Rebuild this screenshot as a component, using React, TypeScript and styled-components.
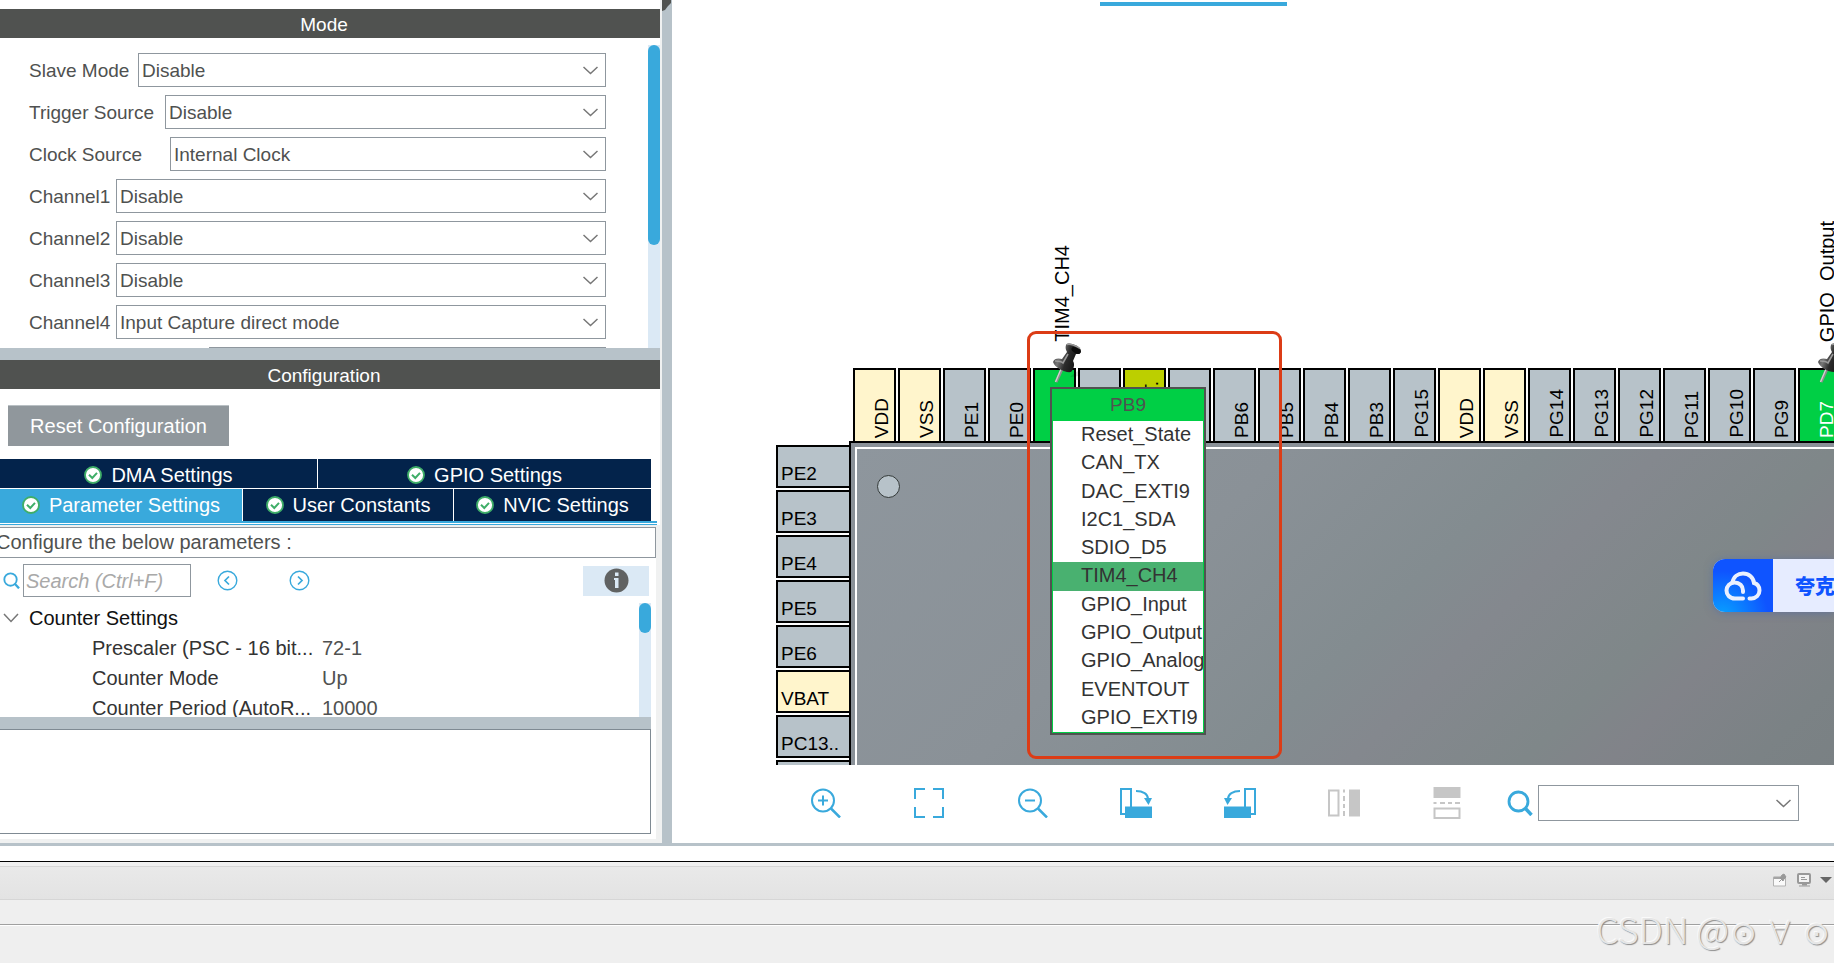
import React from "react";
import styled, { createGlobalStyle, css } from "styled-components";

const color = {
  text: "#4f5150",
  slate: "#505250",
  splitter: "#b7c2c9",
  blue: "#39a9dc",
  paleBlue: "#dbe9f5",
  navy: "#03234b",
  border: "#8f979e",
  pin: "#b7c2c9",
  power: "#fff5cc",
  green: "#00cf45",
  edge: "#f0f1f1",
};

const GlobalStyle = createGlobalStyle`
  *, *::before, *::after { box-sizing: border-box; }
  body { margin: 0; overflow: hidden; background: #fff; }
  body, button, input, select, textarea {
    font-family: "Liberation Sans", Arial, sans-serif;
    font-size: 19px;
    line-height: 22px;
    color: ${color.text};
  }
  button { border: 0; padding: 0; background: none; cursor: pointer; }
  svg { display: block; }
`;

const Page = styled.div`
  display: flex;
  flex-direction: column;
  height: 100vh;
  min-height: 700px;
`;

const Workspace = styled.main`
  display: flex;
  flex: 1;
  min-height: 0;
  border-bottom: 3px solid ${color.splitter};
`;

/* ---------- left side ---------- */

const SidePane = styled.aside`
  display: flex;
  flex-direction: column;
  flex: 0 0 662px;
  border-right: 2px solid ${color.edge};
`;

const VerticalSplitter = styled.div`
  flex: 0 0 10px;
  background: ${color.splitter};
`;

const SplitterCorner = styled.svg`
  width: 10px;
  height: 12px;
`;

const HorizontalSplitter = styled.div`
  flex: 0 0 12px;
  background: ${color.splitter};
`;

const PaneTitle = styled.h2`
  margin: 0;
  height: 29px;
  padding: 2px 12px 0 0;
  font-size: 19px;
  font-weight: 400;
  line-height: 27px;
  text-align: center;
  color: #fff;
  background: ${color.slate};
`;

const ModePane = styled.section`
  flex: 0 0 348px;
  padding-top: 9px;
  overflow: hidden;
`;

const ModeBody = styled.div`
  display: flex;
  justify-content: space-between;
  height: 310px;
`;

const ModeForm = styled.form`
  display: flex;
  flex-direction: column;
  flex: 1;
  gap: 8px;
  padding: 15px 42px 0 29px;
`;

const Field = styled.div<{ $label: number }>`
  display: grid;
  grid-template-columns: ${(p) => p.$label}px 1fr;
  align-items: center;
  flex: 0 0 34px;
  white-space: nowrap;
`;

const FieldLabel = styled.label`
  padding-top: 2px;
`;

const SelectFrame = styled.span<{ $h?: number }>`
  position: relative;
  display: flex;
  flex: 1;
  height: ${(p) => p.$h ?? 34}px;
`;

const Select = styled.select`
  appearance: none;
  width: 100%;
  height: 100%;
  padding: 2px 30px 0 3px;
  border: 1px solid ${color.border};
  border-radius: 0;
  background: #fff;
`;

const SelectArrow = styled.svg`
  position: absolute;
  right: 8px;
  top: 50%;
  margin-top: -4px;
  pointer-events: none;
`;

const Track = styled.div<{ $top: number }>`
  flex: 0 0 12px;
  margin-top: ${(p) => p.$top}px;
  background: ${color.paleBlue};
`;

const Thumb = styled.div<{ $h: number }>`
  height: ${(p) => p.$h}px;
  border-radius: 6px;
  background: ${color.blue};
`;

const ConfigPane = styled.section`
  display: flex;
  flex-direction: column;
  flex: 1;
  min-height: 0;
`;

const ResetButton = styled.button`
  align-self: flex-start;
  width: 221px;
  height: 41px;
  margin: 16px 0 13px 8px;
  font-size: 20px;
  color: #fff;
  background: #90979c;
  border-top: 1px solid #b9c0c4;
`;

const Tabs = styled.div`
  display: flex;
  flex-direction: column;
  gap: 1px;
  padding-right: 9px;
`;

const TabRow = styled.div<{ $cols: string }>`
  display: grid;
  grid-template-columns: ${(p) => p.$cols};
  gap: 1px;
`;

const Tab = styled.button<{ $active?: boolean; $back?: boolean }>`
  display: flex;
  align-items: center;
  justify-content: center;
  gap: 9px;
  height: ${(p) => (p.$back ? 29 : 32)}px;
  padding-top: ${(p) => (p.$back ? 3 : 0)}px;
  font-size: 20px;
  white-space: nowrap;
  color: #fff;
  background: ${(p) => (p.$active ? color.blue : color.navy)};
`;

const TabLine = styled.div`
  flex: 0 0 4px;
  margin-right: 3px;
  border-top: 2px solid ${color.blue};
  border-bottom: 1px solid ${color.blue};
`;

const ConfigBody = styled.div`
  display: flex;
  flex-direction: column;
  flex: 1;
  min-height: 0;
  padding: 2px 4px 4px 0;
  background: ${color.edge};
`;

const ConfigSheet = styled.div`
  display: flex;
  flex-direction: column;
  flex: 1;
  min-height: 0;
  padding-bottom: 5px;
  background: #fff;
`;

const Hint = styled.p`
  margin: 0;
  flex: 0 0 31px;
  font-size: 20px;
  line-height: 29px;
  text-indent: -4px;
  border: 1px solid ${color.border};
  border-left: 0;
`;

const FilterRow = styled.div`
  display: flex;
  align-items: center;
  flex: 0 0 45px;
  padding: 0 7px 0 3px;
`;

const FilterInput = styled.input`
  width: 168px;
  height: 33px;
  margin: 0 26px 0 3px;
  padding: 2px 2px 0;
  font-size: 20px;
  border: 1px solid ${color.border};
  border-radius: 0;
  &::placeholder {
    color: #a9a9a9;
    opacity: 1;
    font-style: italic;
  }
`;

const StepButton = styled.button`
  width: 21px;
  margin-right: 51px;
`;

const InfoButton = styled.button`
  display: flex;
  align-items: center;
  justify-content: center;
  width: 66px;
  height: 30px;
  margin-left: auto;
  background: ${color.paleBlue};
`;

const TreePane = styled.div`
  display: flex;
  flex: 0 0 114px;
  overflow: hidden;
  padding-right: 5px;
`;

const TreeContent = styled.div`
  flex: 1;
`;

const GroupButton = styled.button`
  display: flex;
  align-items: center;
  gap: 10px;
  height: 30px;
  padding-left: 3px;
  font-size: 20px;
  color: #111;
`;

const ParamTable = styled.table`
  border-collapse: collapse;
  th,
  td {
    height: 30px;
    padding: 0;
    font-size: 20px;
    line-height: 22px;
    text-align: left;
    font-weight: 400;
    white-space: nowrap;
  }
  th {
    width: 322px;
    padding-left: 92px;
    color: #333;
  }
`;

const LowerSplitter = styled(HorizontalSplitter)`
  margin-right: 5px;
`;

const Notes = styled.textarea`
  flex: 1;
  min-height: 0;
  margin-right: 5px;
  border: 1px solid #7f8a93;
  border-left: 0;
  border-radius: 0;
  resize: none;
  outline: none;
`;

/* ---------- pinout view ---------- */

const PinoutPane = styled.section`
  display: flex;
  flex-direction: column;
  flex: 1;
  min-width: 0;
`;

const Canvas = styled.div`
  position: relative;
  flex: 1;
  overflow: hidden;
`;

const ActiveViewBar = styled.div`
  position: absolute;
  left: 428px;
  top: 2px;
  width: 187px;
  height: 4px;
  background: ${color.blue};
`;

const TopPins = styled.div`
  position: absolute;
  left: 181px;
  top: 368px;
  display: flex;
  gap: 2px;
`;

const SidePins = styled.div`
  position: absolute;
  left: 104px;
  top: 445px;
  display: flex;
  flex-direction: column;
  gap: 2px;
`;

type Kind = "io" | "power" | "boot" | "used";
const fills: Record<Kind, string> = {
  io: color.pin,
  power: color.power,
  boot: "#bccf00",
  used: color.green,
};

const pinLook = css<{ $kind: Kind }>`
  color: ${(p) => (p.$kind === "used" ? "#fff" : "#000")};
  background: ${(p) => fills[p.$kind]};
  border: 2px solid #000;
`;

const TopPin = styled.button<{ $kind: Kind }>`
  ${pinLook}
  position: relative;
  display: flex;
  align-items: flex-end;
  justify-content: flex-end;
  width: 43px;
  height: 75px;
  padding: 0 1px 3px 0;
`;

const UpText = styled.span`
  writing-mode: vertical-rl;
  transform: rotate(180deg);
  white-space: nowrap;
`;

const SignalLabel = styled(UpText)`
  position: absolute;
  right: 1px;
  bottom: 99px;
  font-size: 20px;
  color: #000;
`;

const PushPin = styled.svg`
  position: absolute;
  left: 18px;
  top: -28px;
  overflow: visible;
`;

const SidePin = styled.button<{ $kind: Kind }>`
  ${pinLook}
  display: flex;
  align-items: flex-end;
  width: 76px;
  height: 43px;
  padding: 0 0 1px 3px;
`;

const Chip = styled.div`
  position: absolute;
  left: 177px;
  top: 441px;
  right: -700px;
  bottom: -900px;
  padding: 4px;
  border: 2px solid #000;
  background: #8a9198;
`;

const ChipFace = styled.div`
  height: 100%;
  border: 2px solid #fff;
  background: linear-gradient(
    135deg,
    #8e969d 0%,
    #8a9197 15%,
    #838c90 24%,
    #84888e 28%,
    #7f8789 34%,
    #818389 37%,
    #7b8285 42%,
    #73797c 60%
  );
`;

const PinOneMark = styled.div`
  width: 23px;
  height: 23px;
  margin: 26px 0 0 20px;
  border: 1px solid #333938;
  border-radius: 50%;
  background: ${color.pin};
`;

const PinMenu = styled.div`
  position: absolute;
  left: 378px;
  top: 387px;
  display: flex;
  flex-direction: column;
  width: 156px;
  height: 348px;
  border: 2px solid ${color.slate};
`;

const PinMenuTitle = styled.div`
  flex: 0 0 29px;
  line-height: 32px;
  text-align: center;
  color: ${color.slate};
  background: ${color.green};
`;

const PinMenuList = styled.div`
  display: flex;
  flex: 1;
  flex-direction: column;
  border: 1px solid ${color.green};
  border-top: 0;
  background: #fff;
`;

const PinMenuItem = styled.button<{ $on?: boolean }>`
  flex: 1;
  padding: 0 0 2px 28px;
  font-size: 20px;
  text-align: left;
  white-space: nowrap;
  overflow: hidden;
  color: #333;
  background: ${(p) => (p.$on ? "#49b170" : "#fff")};
`;

const Highlight = styled.div`
  position: absolute;
  left: 355px;
  top: 331px;
  width: 255px;
  height: 428px;
  border: 3px solid #dc3c16;
  border-radius: 9px;
  pointer-events: none;
`;

const CloudBadge = styled.button`
  position: absolute;
  right: 0;
  top: 559px;
  display: flex;
  width: 121px;
  height: 53px;
  overflow: hidden;
  border-radius: 12px 0 0 12px;
  background: #e6ecff;
  box-shadow: 0 1px 8px rgba(70, 100, 170, 0.5);
`;

const CloudLogo = styled.span`
  display: flex;
  align-items: center;
  justify-content: center;
  flex: 0 0 60px;
  height: 53px;
  background: radial-gradient(circle at 15% 110%, #08a4ff 0%, #0f54ff 60%);
`;

const CloudText = styled.span`
  padding-left: 22px;
  font-family: "Noto Sans CJK SC", sans-serif;
  font-size: 20px;
  font-weight: 900;
  line-height: 53px;
  white-space: nowrap;
  color: #0f54ff;
`;

const Toolbar = styled.div`
  display: flex;
  align-items: center;
  flex: 0 0 78px;
  padding: 0 35px 2px 102px;
`;

const ToolGrid = styled.div`
  display: grid;
  grid-template-columns: repeat(7, 1fr);
  justify-items: center;
  flex: 0 0 725px;
`;

const PinSearch = styled.label`
  display: flex;
  align-items: center;
  flex: 1;
  gap: 5px;
  padding-left: 8px;
`;

/* ---------- bottom strip ---------- */

const Console = styled.footer`
  flex: 0 0 117px;
  padding-top: 15px;
  background: #fff;
`;

const ConsoleFrame = styled.div`
  position: relative;
  height: 102px;
  padding-top: 4px;
  border-top: 1px solid #000;
  background: #efefef;
`;

const ConsoleBar = styled.div`
  display: flex;
  align-items: center;
  justify-content: flex-end;
  gap: 9px;
  height: 34px;
  padding: 0 2px 6px 0;
  border-top: 1px solid #d6d6d6;
  border-bottom: 1px solid #d6d6d6;
  background: linear-gradient(#e9e9e9, #e3e3e3);
`;

const ConsoleLine = styled.div`
  height: 25px;
  border-bottom: 1px solid #a0a0a0;
  box-shadow: 0 1px 0 #fff;
`;

const Watermark = styled.span`
  position: absolute;
  right: 4px;
  top: 41px;
  display: flex;
  align-items: baseline;
  gap: 1px;
  font-family: "Noto Sans CJK SC", sans-serif;
  font-size: 36px;
  font-weight: 300;
  line-height: 50px;
  white-space: nowrap;
  color: #e6e6e6;
  text-shadow: 1px 1px 1px #8c8c8c, -1px -1px 0 #fafafa;
`;

const WatermarkFace = styled.span`
  display: flex;
  gap: 12px;
  font-family: "DejaVu Sans", sans-serif;
  font-size: 32px;
`;

/* ---------- icons ---------- */

const Chevron = () => (
  <SelectArrow width="15" height="9" viewBox="0 0 15 9" fill="none" stroke="#777" strokeWidth="1.5">
    <path d="M.5 1 7.5 7.5 14.5 1" />
  </SelectArrow>
);

const CheckMark = () => (
  <svg width="18" height="18" viewBox="0 0 18 18">
    <circle cx="9" cy="9" r="8" fill="#fff" stroke="#3fae68" strokeWidth="1.800" />
    <path d="M5 8.800 8.300 12 13 6.800" fill="none" stroke="#3fae68" strokeWidth="2" />
  </svg>
);

const SearchIcon = ({ size }: { size: number }) => (
  <svg width={size} height={size} viewBox="0 0 26 26" fill="none" stroke={color.blue}>
    <circle cx="11.500" cy="11.500" r="9.500" strokeWidth="2.800" />
    <path d="M18 18 24.500 25" strokeWidth="3.500" />
  </svg>
);

const StepIcon = ({ next }: { next?: boolean }) => (
  <svg width="21" height="21" viewBox="0 0 21 21" fill="none" stroke={color.blue}>
    <circle cx="10.500" cy="10.500" r="9.300" strokeWidth="1.400" />
    <path d={next ? "M9 6.500 13 10.500 9 14.500" : "M12 6.500 8 10.500 12 14.500"} strokeWidth="1.700" />
  </svg>
);

const InfoIcon = () => (
  <svg width="25" height="25" viewBox="0 0 25 25">
    <circle cx="12.500" cy="12.500" r="12" fill="#606262" />
    <path d="M11 4.500h3.500v3.500h-3.500zM10 10h4.500v10h-3.500v-8h-1z" fill="#dbe9f5" />
  </svg>
);

const ZoomIcon = ({ plus }: { plus?: boolean }) => (
  <svg width="30" height="30" viewBox="0 0 30 30" fill="none" stroke={color.blue} strokeWidth="2">
    <circle cx="12" cy="12.500" r="11" />
    <path d="M20 20.500 29 29.500" strokeWidth="2.500" />
    <path d={plus ? "M7 12.500h10M12 7.500v10" : "M7 12.500h10"} />
  </svg>
);

const FitIcon = () => (
  <svg width="30" height="30" viewBox="0 0 30 30" fill="none" stroke={color.blue} strokeWidth="2">
    <path d="M1 11V1h10M19 1h10v10M29 19v10H19M11 29H1V19" />
  </svg>
);

const RotateIcon = ({ ccw }: { ccw?: boolean }) => (
  <svg width="32" height="30" viewBox="0 0 32 30">
    <g transform={ccw ? "translate(32 0) scale(-1 1)" : undefined}>
      <path d="M5 26H1V1h10v18" fill="none" stroke={color.blue} strokeWidth="2" />
      <path d="M5 18.500h27V30H5z" fill={color.blue} />
      <path d="M16 3c7 0 12 3 12 8" fill="none" stroke={color.blue} strokeWidth="2" />
      <path d="M24 10h8l-3.500 7z" fill={color.blue} />
    </g>
  </svg>
);

const FlipIcon = ({ vertical }: { vertical?: boolean }) => (
  <svg width="32" height="32" viewBox="0 0 32 32">
    <g transform={vertical ? "matrix(0 -1 1 0 0 32)" : undefined} fill="#c6c6c6">
      <path d="M1 3.500h9.500v25H1z" fill="none" stroke="#c6c6c6" strokeWidth="2" />
      <path d="M21 2.500h11v27H21z" />
      <path d="M15 2.500h2v3h-2zM15 9h2v5h-2zM15 17h2v4h-2zM15 24h2v5h-2z" />
    </g>
  </svg>
);

const TackIcon = () => (
  <PushPin width="34" height="42" viewBox="0 0 34 42">
    <defs>
      <linearGradient id="tack" x1="0" y1="0" x2="1" y2=".35">
        <stop offset="0" stopColor="#222" />
        <stop offset=".35" stopColor="#777" />
        <stop offset=".6" stopColor="#2c2c2c" />
        <stop offset="1" stopColor="#111" />
      </linearGradient>
    </defs>
    <path d="M17 35c6-6 14-10 18-8-2 5-9 8-18 8z" fill="#000" opacity=".12" />
    <path d="M9 27 3 40" stroke="#8d8d8d" strokeWidth="3" />
    <path d="M8 27 2.500 40" stroke="#d5d5d5" strokeWidth="1.200" />
    <path
      d="M13 3c2-4 15 1 15 6 0 3-3 3-5 3l-3 7c2 3 1 8-2 11C12 31 2 26 0 20c1-4 6-4 9-3l5-7c-1-2-2-4-1-7z"
      fill="url(#tack)"
    />
    <ellipse cx="23" cy="8.500" rx="5" ry="2.600" transform="rotate(30 23 8.500)" fill="#0c0c0c" />
    <path d="M14 2.500c3-1 9 1 13 4" stroke="#999" strokeWidth="1.500" fill="none" />
    <path d="M2 19c4 0 6 0 8 2l5-9" stroke="#9a9a9a" strokeWidth="1.600" fill="none" />
  </PushPin>
);

const CloudIcon = () => (
  <svg width="38" height="30" viewBox="0 0 38 30" fill="none" stroke="#eaf0ff" strokeWidth="4" strokeLinecap="round">
    <path d="M19 27.500H11C5.500 27.500 2.500 23.500 2.500 19.500 2.500 15 6 11.500 10.500 11.500c5 0 8.500 3.500 8.500 8v1.500" />
    <path d="M8.500 11.500C9.500 5.500 14 2.500 19 2.500c6 0 10.500 4 11 9.500 3.500 1 5.500 4 5.500 7.500 0 4.500-3.500 8-8 8H25.500" />
  </svg>
);

const PinViewIcon = () => (
  <svg width="15" height="14" viewBox="0 0 15 14">
    <path d="M1.500 4.500h12v8.500h-12z" fill="#fafafa" stroke="#b3b3b3" />
    <path d="M1.500 3.500h7v2.500h-7z" fill="#a5a5a5" />
    <path d="m7 9 3-3M8 5l3 3 1-2 2-2-2-3-2 1z" fill="#999" stroke="#999" />
  </svg>
);

const DisplayIcon = () => (
  <svg width="15" height="14" viewBox="0 0 15 14" fill="none" stroke="#999">
    <rect x="2" y="1" width="12" height="9" rx="1" strokeWidth="2" fill="#f3f3f3" />
    <path d="M5 4.500h4M5 6.500h6M3 13h11" />
    <path d="M6 11.500h5" strokeWidth="2" />
  </svg>
);

const MenuArrow = () => (
  <svg width="12" height="6" viewBox="0 0 12 6">
    <path d="M0 0h12L6 6z" fill="#666" />
  </svg>
);

/* ---------- data ---------- */

const modes: [string, string, number][] = [
  ["Slave Mode", "Disable", 109],
  ["Trigger Source", "Disable", 136],
  ["Clock Source", "Internal Clock", 141],
  ["Channel1", "Disable", 87],
  ["Channel2", "Disable", 87],
  ["Channel3", "Disable", 87],
  ["Channel4", "Input Capture direct mode", 87],
];

const topPins: { name: string; kind?: Kind; signal?: string }[] = [
  { name: "VDD", kind: "power" },
  { name: "VSS", kind: "power" },
  { name: "PE1" },
  { name: "PE0" },
  { name: "PB9", kind: "used", signal: "TIM4_CH4" },
  { name: "PB8" },
  { name: "BOOT.", kind: "boot" },
  { name: "PB7" },
  { name: "PB6" },
  { name: "PB5" },
  { name: "PB4" },
  { name: "PB3" },
  { name: "PG15" },
  { name: "VDD", kind: "power" },
  { name: "VSS", kind: "power" },
  { name: "PG14" },
  { name: "PG13" },
  { name: "PG12" },
  { name: "PG11" },
  { name: "PG10" },
  { name: "PG9" },
  { name: "PD7", kind: "used", signal: "GPIO_Output" },
];

const sidePins = ["PE2", "PE3", "PE4", "PE5", "PE6", "VBAT", "PC13.."];

const functions = [
  "Reset_State",
  "CAN_TX",
  "DAC_EXTI9",
  "I2C1_SDA",
  "SDIO_D5",
  "TIM4_CH4",
  "GPIO_Input",
  "GPIO_Output",
  "GPIO_Analog",
  "EVENTOUT",
  "GPIO_EXTI9",
];

const params: [string, string][] = [
  ["Prescaler (PSC - 16 bit...", "72-1"],
  ["Counter Mode", "Up"],
  ["Counter Period (AutoR...", "10000"],
];

const tools: [string, React.ReactNode][] = [
  ["Zoom in", <ZoomIcon plus />],
  ["Best fit", <FitIcon />],
  ["Zoom out", <ZoomIcon />],
  ["Rotate clockwise", <RotateIcon />],
  ["Rotate counter-clockwise", <RotateIcon ccw />],
  ["Flip horizontally", <FlipIcon />],
  ["Flip vertically", <FlipIcon vertical />],
];

/* ---------- sections ---------- */

const ModeSection = () => (
  <ModePane>
    <PaneTitle>Mode</PaneTitle>
    <ModeBody>
      <ModeForm>
        {modes.map(([label, value, width], i) => (
          <Field key={label} $label={width}>
            <FieldLabel htmlFor={`mode-${i}`}>{label}</FieldLabel>
            <SelectFrame>
              <Select id={`mode-${i}`} defaultValue={value}>
                <option>{value}</option>
              </Select>
              <Chevron />
            </SelectFrame>
          </Field>
        ))}
        <Field $label={180}>
          <span />
          <Select aria-label="Combined Channels" defaultValue="">
            <option value="" />
          </Select>
        </Field>
      </ModeForm>
      <Track $top={7}>
        <Thumb $h={200} />
      </Track>
    </ModeBody>
  </ModePane>
);

const ConfigSection = () => (
  <ConfigPane>
    <PaneTitle>Configuration</PaneTitle>
    <ResetButton type="button">Reset Configuration</ResetButton>
    <Tabs>
      <TabRow $cols="317px 1fr">
        <Tab $back><CheckMark />DMA Settings</Tab>
        <Tab $back><CheckMark />GPIO Settings</Tab>
      </TabRow>
      <TabRow $cols="242px 210px 1fr">
        <Tab $active><CheckMark />Parameter Settings</Tab>
        <Tab><CheckMark />User Constants</Tab>
        <Tab><CheckMark />NVIC Settings</Tab>
      </TabRow>
    </Tabs>
    <TabLine />
    <ConfigBody>
      <ConfigSheet>
        <Hint>Configure the below parameters :</Hint>
        <FilterRow>
          <SearchIcon size={17} />
          <FilterInput type="text" aria-label="Search parameters" placeholder="Search (Ctrl+F)" />
          <StepButton aria-label="Previous match"><StepIcon /></StepButton>
          <StepButton aria-label="Next match"><StepIcon next /></StepButton>
          <InfoButton aria-label="Show description"><InfoIcon /></InfoButton>
        </FilterRow>
        <TreePane>
          <TreeContent>
            <GroupButton>
              <svg width="16" height="10" viewBox="0 0 16 10" fill="none" stroke="#777" strokeWidth="1.500">
                <path d="M1 1 8 8.500 15 1" />
              </svg>
              Counter Settings
            </GroupButton>
            <ParamTable>
              <tbody>
                {params.map(([name, value]) => (
                  <tr key={name}>
                    <th scope="row">{name}</th>
                    <td>{value}</td>
                  </tr>
                ))}
              </tbody>
            </ParamTable>
          </TreeContent>
          <Track $top={0}>
            <Thumb $h={30} />
          </Track>
        </TreePane>
        <LowerSplitter />
        <Notes aria-label="Parameter description" readOnly />
      </ConfigSheet>
    </ConfigBody>
  </ConfigPane>
);

const PinoutSection = () => (
  <PinoutPane>
    <Canvas>
      <ActiveViewBar />
      <TopPins>
        {topPins.map((pin, i) => (
          <TopPin key={i} $kind={pin.kind ?? "io"}>
            <UpText>{pin.name}</UpText>
            {pin.signal && <SignalLabel>{pin.signal}</SignalLabel>}
            {pin.signal && <TackIcon />}
          </TopPin>
        ))}
      </TopPins>
      <SidePins>
        {sidePins.map((name) => (
          <SidePin key={name} $kind={name === "VBAT" ? "power" : "io"}>
            {name}
          </SidePin>
        ))}
        <SidePin $kind="io" aria-label="PC14" />
      </SidePins>
      <Chip>
        <ChipFace>
          <PinOneMark />
        </ChipFace>
      </Chip>
      <PinMenu>
        <PinMenuTitle>PB9</PinMenuTitle>
        <PinMenuList>
          {functions.map((name) => (
            <PinMenuItem key={name} $on={name === "TIM4_CH4"}>
              {name}
            </PinMenuItem>
          ))}
        </PinMenuList>
      </PinMenu>
      <Highlight />
      <CloudBadge>
        <CloudLogo>
          <CloudIcon />
        </CloudLogo>
        <CloudText>夸克</CloudText>
      </CloudBadge>
    </Canvas>
    <Toolbar>
      <ToolGrid>
        {tools.map(([label, icon]) => (
          <button key={label} aria-label={label}>
            {icon}
          </button>
        ))}
      </ToolGrid>
      <PinSearch>
        <SearchIcon size={26} />
        <SelectFrame $h={36}>
          <Select aria-label="Find pin" defaultValue="">
            <option value="" />
          </Select>
          <Chevron />
        </SelectFrame>
      </PinSearch>
    </Toolbar>
  </PinoutPane>
);

export default function App() {
  return (
    <>
      <GlobalStyle />
      <Page>
        <Workspace>
          <SidePane>
            <ModeSection />
            <HorizontalSplitter />
            <ConfigSection />
          </SidePane>
          <VerticalSplitter>
            <SplitterCorner viewBox="0 0 10 12">
              <path d="M0 0h9v3l-3 3-3 4-3 1z" fill={color.slate} />
            </SplitterCorner>
          </VerticalSplitter>
          <PinoutSection />
        </Workspace>
        <Console>
          <ConsoleFrame>
            <ConsoleBar>
              <button aria-label="Pin view"><PinViewIcon /></button>
              <button aria-label="Select display"><DisplayIcon /></button>
              <button aria-label="View menu"><MenuArrow /></button>
            </ConsoleBar>
            <ConsoleLine />
            <Watermark>
              <span>CSDN @</span>
              <WatermarkFace>
                <span>⊙</span>
                <span>∀</span>
                <span>⊙</span>
              </WatermarkFace>
            </Watermark>
          </ConsoleFrame>
        </Console>
      </Page>
    </>
  );
}
